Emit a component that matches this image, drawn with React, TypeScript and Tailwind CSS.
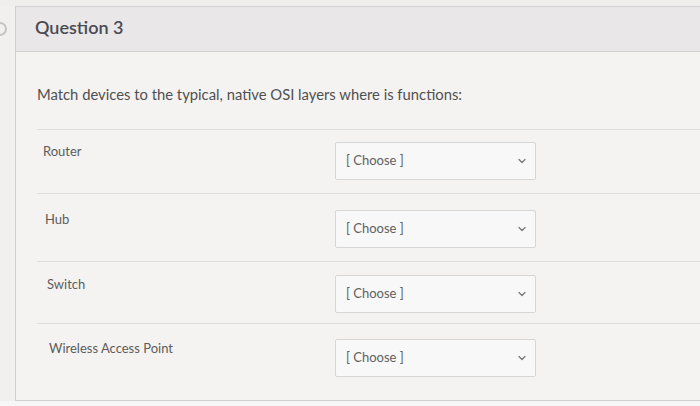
import { ChevronDown } from 'lucide-react';

type Row = { label: string; h: string; pad: string; indent: string };

const rows: Row[] = [
  { label: 'Router', h: 'h-[64px]', pad: 'pt-[12px]', indent: 'pl-[6px]' },
  { label: 'Hub', h: 'h-[68px]', pad: 'pt-[16px]', indent: 'pl-[8px]' },
  { label: 'Switch', h: 'h-[62px]', pad: 'pt-[13px]', indent: 'pl-[10px]' },
  { label: 'Wireless Access Point', h: 'h-[77px]', pad: 'pt-[15px]', indent: 'pl-[12px]' },
];

function ChooseSelect() {
  return (
    <div className="flex h-[38px] w-[201px] items-center justify-between rounded-[2px] border border-[#d6d6d6] bg-[#f8f8f8] pl-[10px] pr-[7px]">
      <span className="text-[13px] text-[#616161]">[ Choose ]</span>
      <ChevronDown className="h-[12px] w-[12px] text-[#777]" strokeWidth={2.5} />
    </div>
  );
}

export default function App() {
  return (
    <div className="flex h-[406px] w-[700px] flex-col overflow-hidden bg-[#f1f0ef] font-['Lato','Liberation_Sans',sans-serif]">
      <div className="h-[6px] shrink-0 bg-[#efeeed]" />
      <div className="flex flex-1">
        <div className="relative w-[15px] shrink-0">
          <div className="absolute left-[-7px] top-[16px] h-[14px] w-[14px] rounded-full border-2 border-[#c4c4c4]" />
        </div>

        <div className="flex flex-1 flex-col border-l border-t border-b border-[#cfcfcf] bg-[#f4f3f2]">
          {/* header */}
          <div className="flex h-[45px] shrink-0 items-center border-b border-[#d2d2d2] bg-[#e9e7e8] pb-[3px] pl-[19px]">
            <h2 className="text-[18px] font-semibold text-[#4a4a52]">Question 3</h2>
          </div>

          {/* body */}
          <div className="flex flex-1 flex-col pl-[21px]">
            <p className="pt-[31px] pb-[24px] text-[14.8px] text-[#505050]">
              Match devices to the typical, native OSI layers where is functions:
            </p>
            {rows.map((r, i) => (
              <div
                key={r.label}
                className={`flex items-start border-t border-[#dddddd] ${i === rows.length - 1 ? 'flex-1' : r.h} ${r.pad}`}
              >
                <span className={`w-[298px] shrink-0 text-[13px] text-[#5c5c5c] ${r.indent}`}>
                  {r.label}
                </span>
                <ChooseSelect />
              </div>
            ))}
          </div>
        </div>
      </div>
      <div className="h-[5px] shrink-0 bg-[#f6f6f6]" />
    </div>
  );
}
